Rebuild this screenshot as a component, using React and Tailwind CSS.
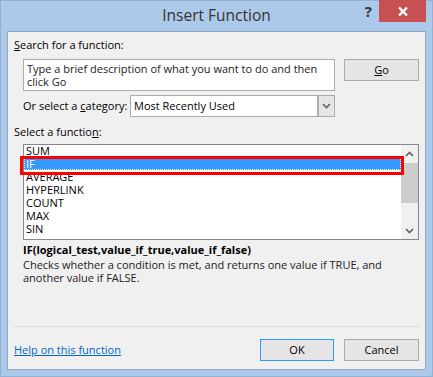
import React from "react";

const FONT = { fontFamily: '"Segoe UI", "Open Sans", "Noto Sans", sans-serif' };

const FUNCTIONS = ["SUM", "IF", "AVERAGE", "HYPERLINK", "COUNT", "MAX", "SIN"];

function Chevron({ up }) {
  return (
    <svg width="9" height="6" viewBox="0 0 9 6" className={up ? "rotate-180" : ""}>
      <path d="M1 1 L4.5 4.5 L8 1" fill="none" stroke="#606060" strokeWidth="1.6" />
    </svg>
  );
}

export default function App() {
  return (
    <div
      className="w-[433px] h-[377px] bg-[#adc9e9] border border-[#94b0d2] flex flex-col text-[11px] text-black"
      style={FONT}
    >
      {/* Title bar */}
      <div className="relative h-[30px] shrink-0 flex items-center justify-center">
        <span className="text-[15.5px] text-[#333] leading-none -mt-[1px]">Insert Function</span>
        <span className="absolute right-[60px] top-[3px] text-[15px] font-bold text-[#333] leading-none">?</span>
        <div className="absolute right-[6px] -top-[1px] w-[47px] h-[22px] bg-[#c75050] flex items-center justify-center">
          <svg width="10" height="9" viewBox="0 0 10 9">
            <path d="M1 0.5 L9 8.5 M9 0.5 L1 8.5" stroke="#fff" strokeWidth="2.4" />
          </svg>
        </div>
      </div>

      {/* Panel */}
      <div className="mx-[6px] mb-[6px] flex-1 bg-[#f0f0f0] border border-[#8fa8c8] flex flex-col px-[6px]">
        <div className="mt-[5px] h-[16px] leading-[16px]">
          <span className="underline">S</span>earch for a function:
        </div>

        <div className="mt-[6px] flex pl-[9px] gap-[9px]">
          <div className="w-[312px] h-[32px] bg-white border border-[#abadb3] px-[3px] pt-[2px] leading-[13px] text-[#222]">
            Type a brief description of what you want to do and then click Go
          </div>
          <div className="w-[75px] h-[22px] bg-[#e5e5e5] border border-[#acacac] flex items-center justify-center">
            <span className="underline">G</span>o
          </div>
        </div>

        <div className="mt-[4px] flex items-center pl-[9px]">
          <span className="w-[107px]">
            Or select a <span className="underline">c</span>ategory:
          </span>
          <div className="w-[205px] h-[22px] bg-white border border-[#acacac] flex">
            <div className="flex-1 px-[3px] leading-[20px]">Most Recently Used</div>
            <div className="w-[17px] bg-[#e5e5e5] border-l-2 border-[#acacac] flex items-center justify-center">
              <Chevron />
            </div>
          </div>
        </div>

        <div className="mt-[7px] h-[16px] leading-[16px]">
          Select a functio<span className="underline">n</span>:
        </div>

        <div className="relative mt-[4px] ml-[9px] w-[396px] h-[96px]">
          <div className="w-full h-full bg-white border border-[#828790] flex overflow-hidden">
            <div className="flex-1 overflow-hidden">
              <div className="-mt-[1px]">
                {FUNCTIONS.map((f) => (
                  <div
                    key={f}
                    className={
                      "h-[13px] leading-[13px] px-[2px] " +
                      (f === "IF" ? "bg-[#3399ff] text-white outline outline-1 outline-dotted outline-[#f0f0f0] -outline-offset-1" : "text-black")
                    }
                  >
                    {f}
                  </div>
                ))}
              </div>
            </div>
            <div className="w-[17px] bg-[#f0f0f0] flex flex-col items-center">
              <div className="h-[17px] flex items-center justify-center">
                <Chevron up />
              </div>
              <div className="w-full h-[40px] bg-[#cdcdcd] mt-[1px]" />
              <div className="flex-1" />
              <div className="h-[17px] flex items-center justify-center">
                <Chevron />
              </div>
            </div>
          </div>
          {/* highlight box */}
          <div className="absolute left-[-3px] w-[384px] top-[12px] h-[19px] border-[3px] border-[#ff0000]" />
        </div>

        <div className="mt-[2px] pl-[9px] font-bold h-[16px] leading-[16px]">
          IF(logical_test,value_if_true,value_if_false)
        </div>
        <div className="pl-[9px] leading-[13px] text-[#222] w-[390px]">
          Checks whether a condition is met, and returns one value if TRUE, and another value if FALSE.
        </div>

        <div className="mt-auto border-t border-[#dcdcdc]" />
        <div className="mt-[12px] mb-[8px] flex items-center">
          <span className="flex-1 text-[#0066cc] underline">Help on this function</span>
          <div className="w-[74px] h-[22px] bg-[#e5e5e5] border border-[#3399ff] flex items-center justify-center">
            OK
          </div>
          <div className="ml-[10px] w-[75px] h-[22px] bg-[#e5e5e5] border border-[#acacac] flex items-center justify-center">
            Cancel
          </div>
        </div>
      </div>
    </div>
  );
}
